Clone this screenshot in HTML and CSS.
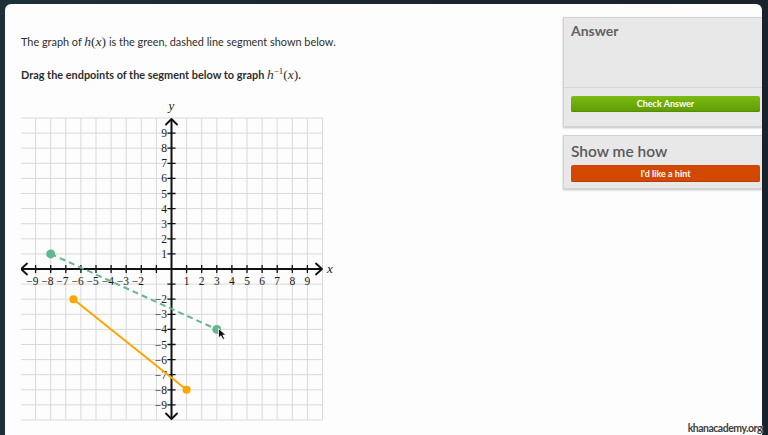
FILE: index.html
```html
<!DOCTYPE html>
<html>
<head>
<meta charset="utf-8">
<link rel="stylesheet" href="styles.css">
</head>
<body>
<div class="frame">
  <div class="card">
    <div class="main">
      <p class="q1">The graph of <span class="m"><i>h</i>(<i>x</i>)</span> is the green, dashed line segment shown below.</p>
      <p class="q2">Drag the endpoints of the segment below to graph <span class="m"><i>h</i><sup>−1</sup>(<i>x</i>)</span>.</p>
      <svg class="graph" width="330" height="330" viewBox="11 0 330 330" xmlns="http://www.w3.org/2000/svg">
        <g transform="translate(161.5,174) scale(15.1,-15.1)">
          <path class="grid" vector-effect="non-scaling-stroke" d="M-10 -10V10M-9 -10V10M-8 -10V10M-7 -10V10M-6 -10V10M-5 -10V10M-4 -10V10M-3 -10V10M-2 -10V10M-1 -10V10M0 -10V10M1 -10V10M2 -10V10M3 -10V10M4 -10V10M5 -10V10M6 -10V10M7 -10V10M8 -10V10M9 -10V10M10 -10V10M-10 -10H10M-10 -9H10M-10 -8H10M-10 -7H10M-10 -6H10M-10 -5H10M-10 -4H10M-10 -3H10M-10 -2H10M-10 -1H10M-10 0H10M-10 1H10M-10 2H10M-10 3H10M-10 4H10M-10 5H10M-10 6H10M-10 7H10M-10 8H10M-10 9H10M-10 10H10"/>
          <path class="tick" vector-effect="non-scaling-stroke" d="M-9 -0.27V0.27M-8 -0.27V0.27M-7 -0.27V0.27M-6 -0.27V0.27M-5 -0.27V0.27M-4 -0.27V0.27M-3 -0.27V0.27M-2 -0.27V0.27M-1 -0.27V0.27M1 -0.27V0.27M2 -0.27V0.27M3 -0.27V0.27M4 -0.27V0.27M5 -0.27V0.27M6 -0.27V0.27M7 -0.27V0.27M8 -0.27V0.27M9 -0.27V0.27M-0.27 -9H0.27M-0.27 -8H0.27M-0.27 -7H0.27M-0.27 -6H0.27M-0.27 -5H0.27M-0.27 -4H0.27M-0.27 -3H0.27M-0.27 -2H0.27M-0.27 -1H0.27M-0.27 1H0.27M-0.27 2H0.27M-0.27 3H0.27M-0.27 4H0.27M-0.27 5H0.27M-0.27 6H0.27M-0.27 7H0.27M-0.27 8H0.27M-0.27 9H0.27"/>
        </g>
        <path class="axis" d="M11.5 174H311.5M161.5 24V324"/>
        <path class="arrow" d="M306 168.5L312 174L306 179.5M17 168.5L11 174L17 179.5M156 29.5L161.5 24L167 29.5M156 318.5L161.5 324L167 318.5"/>
        <g class="xl">
          <text x="28.4" y="190">−9</text>
          <text x="43.5" y="190">−8</text>
          <text x="58.6" y="190">−7</text>
          <text x="73.7" y="190">−6</text>
          <text x="88.8" y="190">−5</text>
          <text x="103.9" y="190">−4</text>
          <text x="119" y="190">−3</text>
          <text x="134.1" y="190">−2</text>
        </g>
        <g class="xr">
          <text x="176.6" y="190">1</text>
          <text x="191.7" y="190">2</text>
          <text x="206.8" y="190">3</text>
          <text x="221.9" y="190">4</text>
          <text x="237" y="190">5</text>
          <text x="252.1" y="190">6</text>
          <text x="267.2" y="190">7</text>
          <text x="282.3" y="190">8</text>
          <text x="297.4" y="190">9</text>
        </g>
        <g class="yl">
          <text x="157" y="42">9</text>
          <text x="157" y="57.2">8</text>
          <text x="157" y="72.3">7</text>
          <text x="157" y="87.4">6</text>
          <text x="157" y="102.5">5</text>
          <text x="157" y="117.6">4</text>
          <text x="157" y="132.7">3</text>
          <text x="157" y="147.8">2</text>
          <text x="157" y="162.9">1</text>
          <text x="157" y="208.2">−2</text>
          <text x="157" y="223.3">−3</text>
          <text x="157" y="238.4">−4</text>
          <text x="157" y="253.5">−5</text>
          <text x="157" y="268.6">−6</text>
          <text x="157" y="283.7">−7</text>
          <text x="157" y="298.8">−8</text>
          <text x="157" y="313.9">−9</text>
        </g>
        <text class="axlabel" x="317" y="178">x</text>
        <text class="axlabel" x="158.5" y="15">y</text>
        <line class="green" x1="40.7" y1="158.9" x2="206.8" y2="234.4"/>
        <circle class="gdot" cx="40.7" cy="158.9" r="4.5"/>
        <circle class="gdot" cx="206.8" cy="234.4" r="4.5"/>
        <line class="orange" x1="63.4" y1="204.2" x2="176.6" y2="294.8"/>
        <circle class="odot" cx="63.4" cy="204.2" r="4"/>
        <circle class="odot" cx="176.6" cy="294.8" r="4"/>
        <path class="cursor" d="M208.5 233.5L208.5 243L211 240.8L212.8 244.5L214.6 243.7L212.9 240.1L216 240Z"/>
      </svg>
    </div>
    <div class="side">
      <div class="panel answer">
        <div class="ptitle">Answer</div>
        <div class="pfoot">
          <div class="btn check">Check Answer</div>
        </div>
      </div>
      <div class="panel show">
        <div class="ptitle big">Show me how</div>
        <div class="btn hint">I'd like a hint</div>
      </div>
    </div>
    <div class="wm">khanacademy.org</div>
  </div>
</div>
</body>
</html>
```
FILE: styles.css
```css
html, body {
  margin: 0;
  padding: 0;
}
body {
  width: 768px;
  height: 435px;
  overflow: hidden;
  background: #1c2731;
  font-family: "Lato", "Open Sans", sans-serif;
}
.frame {
  box-sizing: border-box;
  height: 435px;
  padding: 4px 6px 0 5px;
  background: linear-gradient(90deg, #1f3138 0%, #1b2630 50%, #1a232c 100%);
}
.card {
  position: relative;
  height: 431px;
  background: #fdfdfd;
  border-radius: 6px 6px 0 0;
  display: flex;
}
.main {
  flex: 1;
  padding: 31px 0 0 16px;
}
.main p {
  margin: 0;
  font-size: 10.9px;
  line-height: 14px;
  color: #2e2e2e;
}
.q1 {
  margin-bottom: 19px !important;
}
.q2 {
  font-weight: bold;
}
.m {
  font-family: "Liberation Serif", "DejaVu Serif", serif;
  font-size: 13.5px;
  font-weight: normal;
}
.m i {
  font-style: italic;
}
.m sup {
  font-size: 9px;
  vertical-align: 5px;
  line-height: 0;
}
.graph {
  display: block;
  margin-top: 13px;
}
.grid {
  fill: none;
  stroke: #d9d9d9;
  stroke-width: 1;
}
.tick {
  fill: none;
  stroke: #111;
  stroke-width: 1.3;
}
.axis, .arrow {
  fill: none;
  stroke: #111;
  stroke-width: 2;
}
.arrow {
  stroke-width: 1.8;
  stroke-linecap: round;
  stroke-linejoin: round;
}
.graph text {
  font-family: "Liberation Serif", "DejaVu Serif", serif;
  font-size: 11.5px;
  fill: #1a1a1a;
}
.xl text, .yl text {
  text-anchor: end;
}
.xr text {
  text-anchor: middle;
}
.graph .axlabel {
  font-style: italic;
  font-size: 13px;
}
.green {
  stroke: #62b690;
  stroke-width: 2;
  stroke-dasharray: 6 4;
}
.gdot {
  fill: #62b690;
}
.orange {
  stroke: #ffa500;
  stroke-width: 2;
}
.odot {
  fill: #ffa500;
}
.cursor {
  fill: #111;
  stroke: #fff;
  stroke-width: 0.8;
}
.side {
  width: 199px;
  padding-top: 13px;
  display: flex;
  flex-direction: column;
  gap: 8px;
}
.panel {
  box-sizing: border-box;
  background: #e8e8e8;
  border: 1px solid #d3d3d3;
  border-right: none;
  box-shadow: 0 1px 2px rgba(0, 0, 0, 0.25);
}
.answer {
  height: 110px;
  display: flex;
  flex-direction: column;
}
.ptitle {
  font-size: 14px;
  font-weight: bold;
  color: #626262;
  line-height: 16px;
  padding: 5px 0 0 7px;
  flex: 1;
}
.ptitle.big {
  font-size: 15.5px;
  font-weight: 600;
  color: #5a5a5a;
  line-height: 18px;
  padding: 6px 0 0 7px;
  flex: none;
}
.pfoot {
  height: 39px;
  border-top: 1px solid #d6d6d6;
  padding: 8px 2px 0 7px;
  box-sizing: border-box;
}
.btn {
  height: 16px;
  border-radius: 2px;
  color: #fff;
  font-size: 9px;
  font-weight: bold;
  line-height: 16px;
  text-align: center;
}
.check {
  background: linear-gradient(#7cba14, #5f9c03);
  box-shadow: inset 0 -1px 0 #558c02;
}
.show {
  height: 54px;
}
.hint {
  height: 17px;
  line-height: 17px;
  margin: 5px 2px 0 7px;
  background: #d24800;
  box-shadow: inset 0 -1px 0 #b83e00;
}
.wm {
  position: absolute;
  right: 0;
  bottom: 1px;
  font-size: 10.5px;
  font-weight: bold;
  letter-spacing: -0.5px;
  color: #3e3e3e;
  text-shadow: 0 0 2px #fff, 0 0 1px #fff;
}
```
